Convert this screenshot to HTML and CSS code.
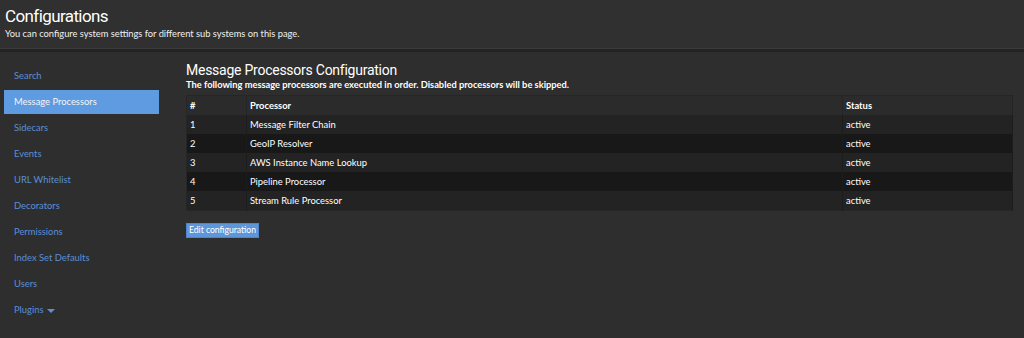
FILE: index.html
```html
<!DOCTYPE html>
<html lang="en">
<head>
<meta charset="UTF-8">
<title>Configurations</title>
<link rel="stylesheet" href="styles.css">
</head>
<body>
    <header class="page-header">
        <h1>Configurations</h1>
        <p>You can configure system settings for different sub systems on this page.</p>
    </header>

    <div class="layout">
        <nav class="side-nav">
            <ul>
                <li><a href="#">Search</a></li>
                <li class="active"><a href="#">Message Processors</a></li>
                <li><a href="#">Sidecars</a></li>
                <li><a href="#">Events</a></li>
                <li><a href="#">URL Whitelist</a></li>
                <li><a href="#">Decorators</a></li>
                <li><a href="#">Permissions</a></li>
                <li><a href="#">Index Set Defaults</a></li>
                <li><a href="#">Users</a></li>
                <li><a href="#">Plugins <span class="caret"></span></a></li>
            </ul>
        </nav>

        <main class="content">
            <h2>Message Processors Configuration</h2>
            <p class="desc">The following message processors are executed in order. Disabled processors will be skipped.</p>

            <table class="proc-table">
                <thead>
                    <tr>
                        <th class="col-num">#</th>
                        <th class="col-name">Processor</th>
                        <th class="col-status">Status</th>
                    </tr>
                </thead>
                <tbody>
                    <tr><td>1</td><td>Message Filter Chain</td><td>active</td></tr>
                    <tr><td>2</td><td>GeoIP Resolver</td><td>active</td></tr>
                    <tr><td>3</td><td>AWS Instance Name Lookup</td><td>active</td></tr>
                    <tr><td>4</td><td>Pipeline Processor</td><td>active</td></tr>
                    <tr><td>5</td><td>Stream Rule Processor</td><td>active</td></tr>
                </tbody>
            </table>

            <button type="button" class="btn-edit">Edit configuration</button>
        </main>
    </div>
</body>
</html>
```

FILE: styles.css
```css
body {
    background-color: #2e2e2e;
    color: #fff;
    font-family: 'Lato', 'Liberation Sans', sans-serif;
    margin: 0;
}

/* Kepala halaman */
.page-header {
    background-color: #303030;
    padding: 6px 5px 0;
    height: 42px;
    border-bottom: 1px solid #3a3a3a;
}

.page-header h1 {
    font-family: 'Roboto', sans-serif;
    font-weight: 400;
    font-size: 17px;
    letter-spacing: -0.6px;
    line-height: 21px;
    margin: 0;
}

.page-header p {
    font-size: 9.3px;
    line-height: 13px;
    margin: 0;
    color: #f0f0f0;
}

.layout {
    border-top: 3px solid #232323;
    display: flex;
    padding: 10px 11px 0 4px;
}

/* Menu samping */
.side-nav {
    flex: 0 0 155px;
    margin: 1px 27px 0 0;
}

.side-nav ul {
    list-style: none;
    margin: 0;
    padding: 0;
}

.side-nav li {
    padding: 1px 0;
}

.side-nav a {
    display: block;
    line-height: 24px;
    padding-left: 10px;
    font-size: 9.4px;
    color: #5b8fd6;
    text-decoration: none;
}

.side-nav li.active a {
    background-color: #5f9be0;
    color: #f4f4f4;
}

.caret {
    display: inline-block;
    width: 0;
    height: 0;
    border-left: 4px solid transparent;
    border-right: 4px solid transparent;
    border-top: 4px solid #5b8fd6;
    vertical-align: middle;
    margin-left: 1px;
}

/* Isi utama */
.content {
    flex: 1;
}

.content h2 {
    font-family: 'Roboto', sans-serif;
    font-weight: 400;
    font-size: 14px;
    letter-spacing: -0.25px;
    line-height: 16px;
    margin: 0;
}

.desc {
    font-size: 9.3px;
    font-weight: 700;
    line-height: 13px;
    margin: 0 0 4px;
}

.proc-table {
    width: 100%;
    border-collapse: collapse;
    font-size: 9.4px;
    border: 1px solid #262626;
}

.proc-table th {
    background-color: #2b2b2b;
    text-align: left;
    height: 19px;
    padding: 0 3px;
    border-right: 1px solid #252525;
}

.proc-table td {
    height: 19px;
    padding: 0 3px;
    border-right: 1px solid #1c1c1c;
}

.proc-table tbody tr:nth-child(odd) td {
    background-color: #232323;
}

.proc-table tbody tr:nth-child(even) td {
    background-color: #181818;
}

.col-num {
    width: 53px;
}

.col-status {
    width: 163px;
}

.btn-edit {
    margin-top: 12px;
    background-color: #5e97d9;
    border: 1px solid #4f86c8;
    color: #fff;
    font-family: 'Lato', sans-serif;
    font-size: 8.6px;
    line-height: 13px;
    padding: 0 2px;
    cursor: pointer;
}
```
